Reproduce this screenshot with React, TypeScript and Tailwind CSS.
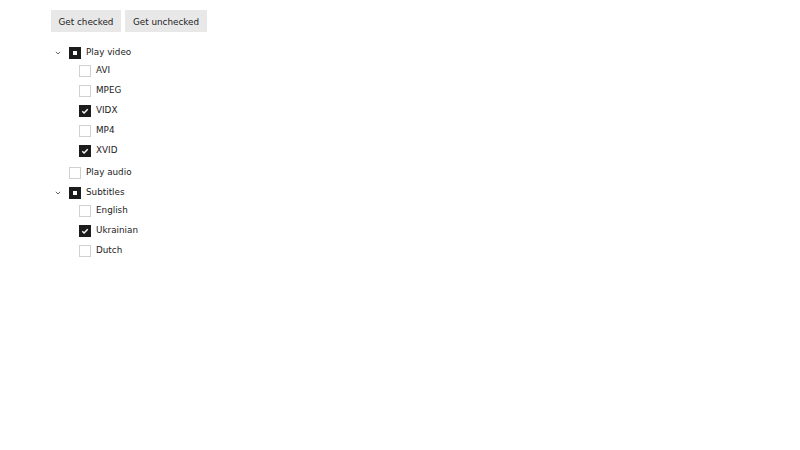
import React from "react";

type State = "checked" | "unchecked" | "indeterminate";

function Box({ state }: { state: State }) {
  if (state === "unchecked") {
    return <div className="w-[12px] h-[12px] border border-[#d0d0d0] bg-white shrink-0" />;
  }
  return (
    <div className="w-[12px] h-[12px] bg-[#1c1c1c] shrink-0 flex items-center justify-center">
      {state === "checked" ? (
        <svg width="8" height="8" viewBox="0 0 8 8">
          <path d="M1.3 4.2 L3.1 6 L6.7 2.2" fill="none" stroke="white" strokeWidth="1.4" />
        </svg>
      ) : (
        <div className="w-[4px] h-[4px] bg-white" />
      )}
    </div>
  );
}

function Chevron() {
  return (
    <svg width="6" height="4" viewBox="0 0 6 4">
      <path d="M0.8 0.8 L3 3 L5.2 0.8" fill="none" stroke="#666" strokeWidth="1" />
    </svg>
  );
}

function Parent({ label, state, expandable }: { label: string; state: State; expandable?: boolean }) {
  return (
    <div className="flex items-center h-[20px]">
      <div className="w-[13px] flex items-center justify-center">{expandable && <Chevron />}</div>
      <div className="w-[5px]" />
      <Box state={state} />
      <span className="ml-[5px]">{label}</span>
    </div>
  );
}

function Child({ label, state }: { label: string; state: State }) {
  return (
    <div className="flex items-center h-[20px] pl-[28px]">
      <Box state={state} />
      <span className="ml-[5px]">{label}</span>
    </div>
  );
}

export default function App() {
  return (
    <div
      className="w-[800px] h-[450px] bg-white text-[#222222] pl-[51px] pt-[10px]"
      style={{ fontFamily: '"DejaVu Sans", sans-serif', fontSize: "8.8px" }}
    >
      <div className="flex gap-[4px]">
        <button className="h-[22px] w-[70px] pt-[3px] flex items-center justify-center bg-[#e8e8e8] text-[#222222]">Get checked</button>
        <button className="h-[22px] w-[82px] pt-[3px] flex items-center justify-center bg-[#e8e8e8] text-[#222222]">Get unchecked</button>
      </div>
      <div className="mt-[11px]">
        <Parent label="Play video" state="indeterminate" expandable />
        <div className="-mt-[2px] pb-[2px]">
          <Child label="AVI" state="unchecked" />
          <Child label="MPEG" state="unchecked" />
          <Child label="VIDX" state="checked" />
          <Child label="MP4" state="unchecked" />
          <Child label="XVID" state="checked" />
        </div>
        <Parent label="Play audio" state="unchecked" />
        <Parent label="Subtitles" state="indeterminate" expandable />
        <div className="-mt-[2px] pb-[2px]">
          <Child label="English" state="unchecked" />
          <Child label="Ukrainian" state="checked" />
          <Child label="Dutch" state="unchecked" />
        </div>
      </div>
    </div>
  );
}
